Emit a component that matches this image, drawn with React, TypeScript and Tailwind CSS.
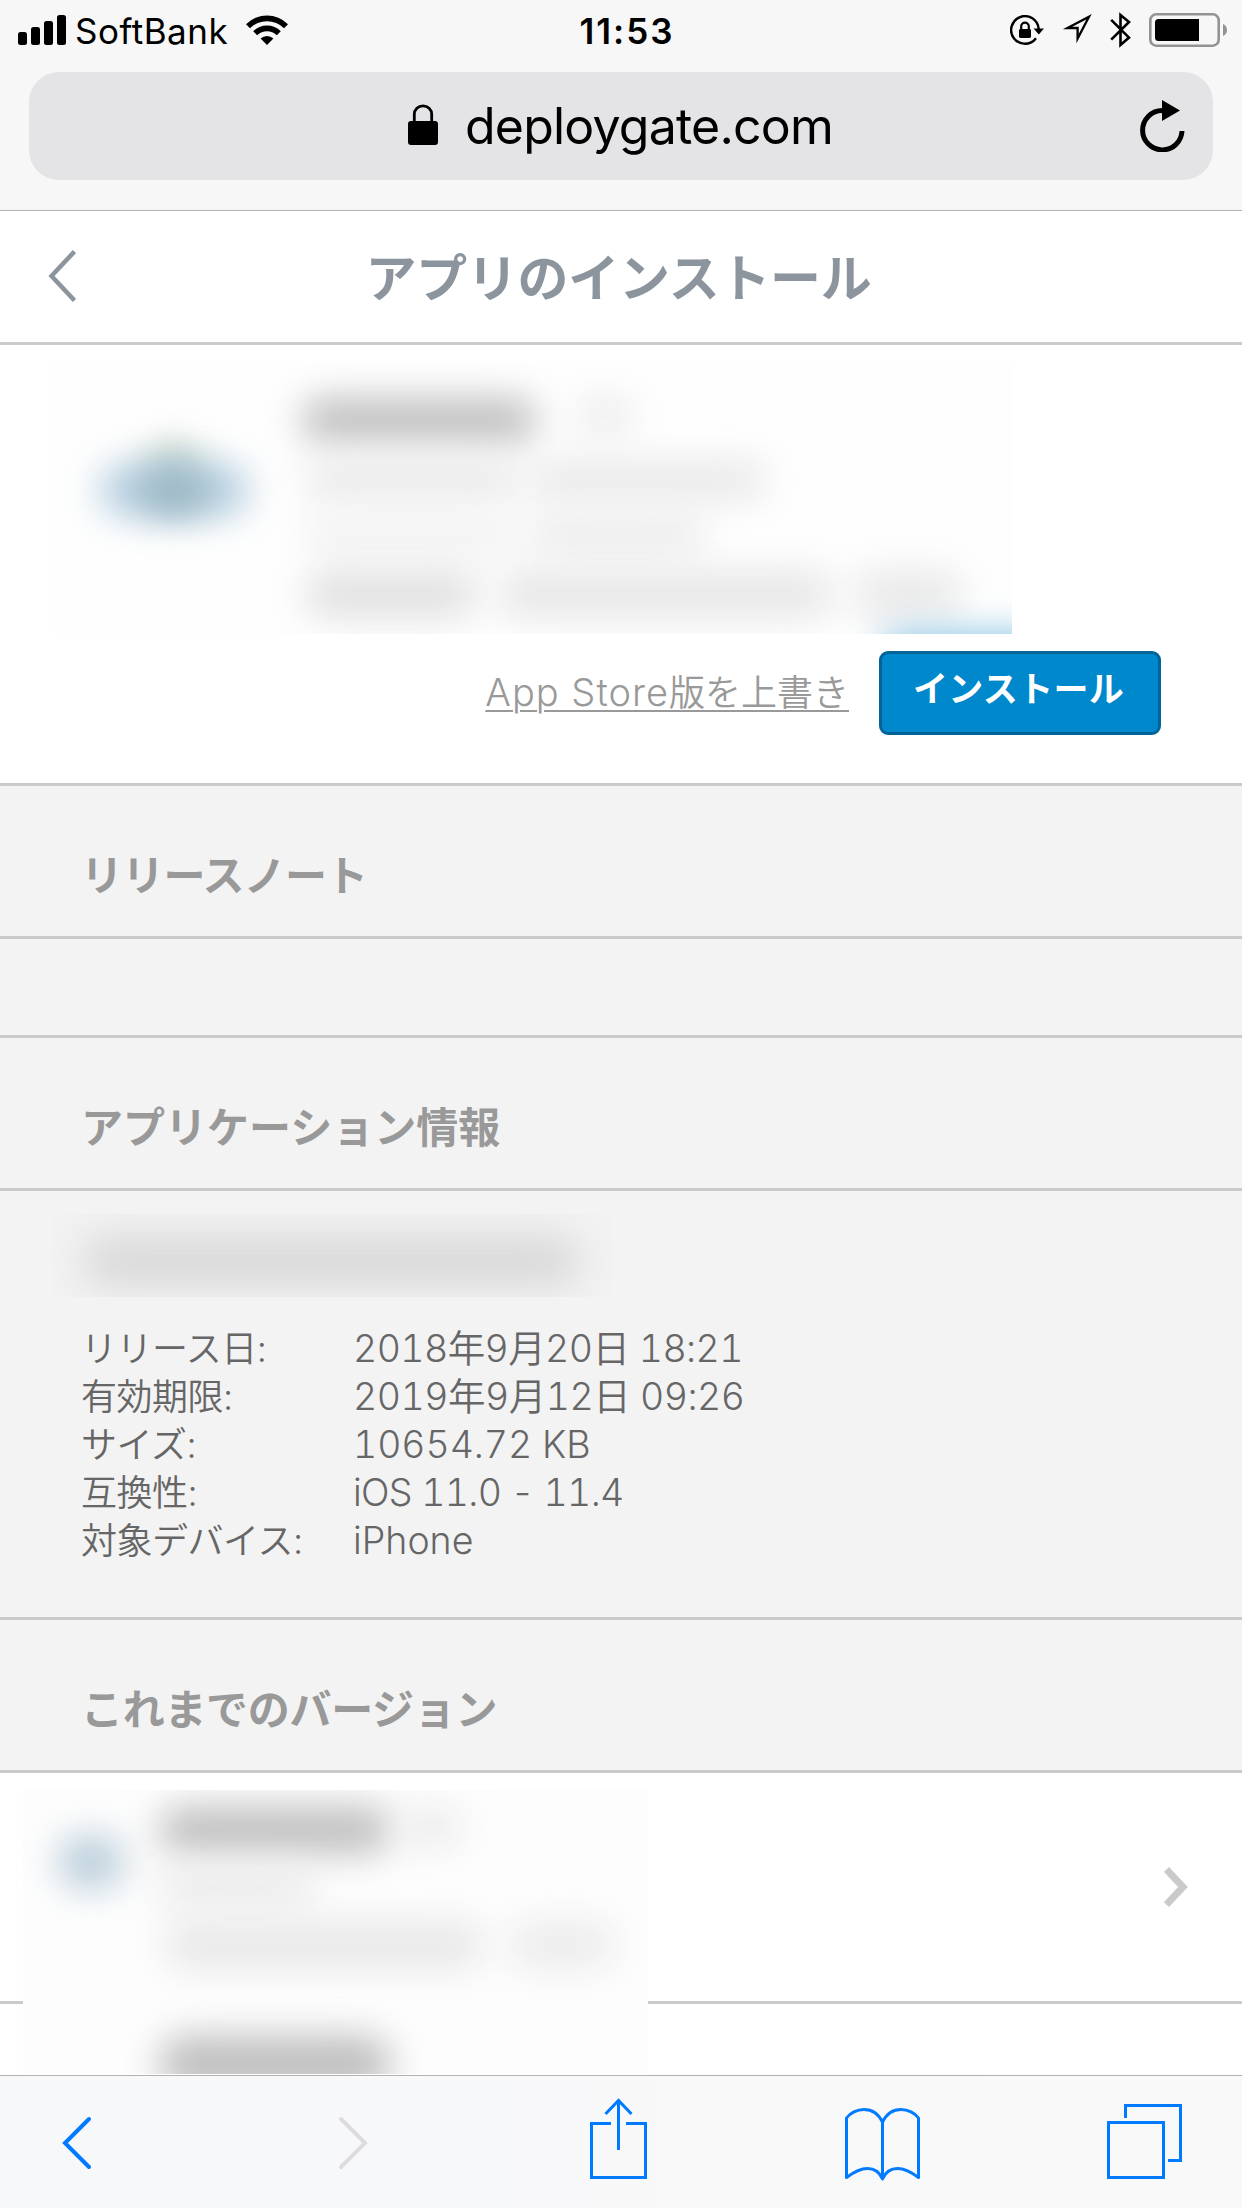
const details = [
    { label: "リリース日:", value: "2018年9月20日 18:21", tracking: "tracking-[-0.6px]" },
    { label: "有効期限:", value: "2019年9月12日 09:26", tracking: "tracking-[-0.5px]" },
    { label: "サイズ:", value: "10654.72 KB", tracking: "tracking-[-0.1px]" },
    { label: "互換性:", value: "iOS 11.0 - 11.4", tracking: "tracking-[-0.7px]" },
    { label: "対象デバイス:", value: "iPhone", tracking: "tracking-normal" },
];

function SignalIcon() {
    return (
        <svg width="48" height="30" viewBox="0 0 48 30">
            <rect x="0" y="17" width="9" height="13" rx="2.5" />
            <rect x="13" y="12" width="9" height="18" rx="2.5" />
            <rect x="26" y="6" width="9" height="24" rx="2.5" />
            <rect x="39" y="0" width="9" height="30" rx="2.5" />
        </svg>
    );
}

function WifiIcon() {
    return (
        <svg width="42" height="30" viewBox="0 0 42 30">
            <path d="M0 9.2a30 30 0 0 1 42 0L38 13.2a24.2 24.2 0 0 0-34 0z" />
            <path d="M7.2 16.3a19.6 19.6 0 0 1 27.6 0l-4 4a14 14 0 0 0-19.6 0z" />
            <path d="M14.6 23.6a9.2 9.2 0 0 1 12.8 0L21 30z" />
        </svg>
    );
}

function RotationLockIcon() {
    return (
        <svg width="34" height="30" viewBox="0 0 34 30">
            <path d="M26 23.2A13.8 13.8 0 1 1 28.7 14" fill="none" stroke="#000" strokeWidth="2.4" />
            <path d="M23.6 13.6h10.4l-5.2 6z" />
            <rect x="9" y="14" width="12" height="9" rx="1.4" />
            <path d="M11.2 15v-3.6a3.8 3.8 0 0 1 7.6 0V15" fill="none" stroke="#000" strokeWidth="2.2" />
        </svg>
    );
}

function LocationIcon() {
    return (
        <svg width="30" height="32" viewBox="0 0 30 32">
            <path d="M5.5 14 27 2.8 15.6 24.5V14z" fill="none" stroke="#000" strokeWidth="2.3" strokeMiterlimit="12" />
        </svg>
    );
}

function BluetoothIcon() {
    return (
        <svg width="22" height="38" viewBox="0 0 22 38">
            <path d="M1.2 8.8 19 26.6l-8.5 7.4V4L19 11 1.2 28.6" fill="none" stroke="#000" strokeWidth="2.6" />
        </svg>
    );
}

function BatteryIcon() {
    return (
        <svg width="78" height="34" viewBox="0 0 78 34">
            <rect x="1.3" y="1.3" width="68.4" height="31.4" rx="6" fill="none" stroke="#939393" strokeWidth="2.6" />
            <path d="M9.5 6H50v22H9.5A3.5 3.5 0 0 1 6 24.5v-15A3.5 3.5 0 0 1 9.5 6z" />
            <path d="M74 11c2.5 1 4 3.3 4 6s-1.5 5-4 6z" fill="#939393" />
        </svg>
    );
}

function LockIcon() {
    return (
        <svg width="30" height="41" viewBox="0 0 30 41">
            <rect x="0" y="17" width="30" height="24" rx="3" />
            <path d="M6.3 18v-7.5a8.7 8.7 0 0 1 17.4 0V18" fill="none" stroke="#000" strokeWidth="2.8" />
        </svg>
    );
}

function ReloadIcon() {
    return (
        <svg width="45" height="52" viewBox="0 0 45 52">
            <path d="M42 31A19.7 19.7 0 1 1 22.3 10.5" fill="none" stroke="#000" strokeWidth="5" />
            <path d="M22 0v21l18-10.5z" />
        </svg>
    );
}

/* Covers private details: a soft bar for each hidden line of text */
function Smudge({ className }: { className: string }) {
    return <div className={`shrink-0 rounded-full blur-[18px] ${className}`} />;
}

function SectionTitle({ children, tracking }: { children: React.ReactNode; tracking: string }) {
    return (
        <h2
            className={`h-[153px] shrink-0 border-b-[3px] border-[#c9cacb] bg-[#f3f3f3] pl-[81px] pt-[68px] text-[42px] font-bold leading-[44px] text-[#999] ${tracking}`}
        >
            {children}
        </h2>
    );
}

export default function App() {
    return (
        <div className="flex h-[2208px] w-[1242px] flex-col overflow-hidden bg-white font-['Inter','Noto_Sans_CJK_JP',sans-serif]">
            {/* Status bar */}
            <div className="grid h-[72px] shrink-0 grid-cols-3 bg-[#f7f7f7]">
                <div className="flex items-start pl-[18px] pt-[15px]">
                    <SignalIcon />
                    <span className="ml-[9px] w-[153px] whitespace-nowrap text-[35px] leading-[32px] tracking-[0.5px]">
                        SoftBank
                    </span>
                    <span className="ml-[18px]">
                        <WifiIcon />
                    </span>
                </div>
                <div className="pl-[12px] pt-[15px] text-center text-[35px] font-semibold leading-[32px] tracking-[2px]">
                    11:53
                </div>
                <div className="flex h-[60px] items-center justify-end pr-[15px]">
                    <RotationLockIcon />
                    <span className="ml-[18px]">
                        <LocationIcon />
                    </span>
                    <span className="ml-[18px]">
                        <BluetoothIcon />
                    </span>
                    <span className="ml-[17px]">
                        <BatteryIcon />
                    </span>
                </div>
            </div>

            {/* Address bar */}
            <div className="h-[139px] shrink-0 border-b border-[#b2b2b2] bg-[#f7f7f7] px-[29px]">
                <div className="flex h-[108px] items-center rounded-[30px] bg-[#e4e4e6] pl-[379px] pr-[28px]">
                    <span className="mt-[-3px]">
                        <LockIcon />
                    </span>
                    <span className="ml-[27px] flex-1 text-[50px] leading-[60px] tracking-[-0.8px]">deploygate.com</span>
                    <ReloadIcon />
                </div>
            </div>

            {/* Page header */}
            <header className="flex h-[134px] shrink-0 items-center border-b-[3px] border-[#ccc] pl-[48px] pr-[81px]">
                <svg className="mt-[-1px]" width="28" height="52" viewBox="0 0 28 52" fill="none" stroke="#8c959d" strokeWidth="4.5">
                    <path d="M26.5 1.5 3.5 26l23 24.5" />
                </svg>
                <h1 className="flex-1 pt-[4px] text-center text-[51px] font-bold leading-[60px] tracking-[-0.3px] text-[#8c959d]">
                    アプリのインストール
                </h1>
            </header>

            {/* Current build */}
            <section className="h-[441px] shrink-0 border-b-[3px] border-[#c9cacb] pt-[16px]">
                <div className="ml-[53px] flex h-[273px] w-[959px] overflow-hidden bg-[#fefefe]">
                    <div className="flex w-[242px] shrink-0 flex-col items-center pt-[82px]">
                        <Smudge className="h-[38px] w-[50px] bg-[#ccd8c8]" />
                        <Smudge className="mt-[-16px] h-[50px] w-[150px] bg-[#b4cee0]" />
                        <Smudge className="mt-[-50px] h-[50px] w-[68px] bg-[#9ab6c2]" />
                    </div>
                    <div className="flex shrink-0 flex-col pl-[6px] pt-[37px]">
                        <div className="flex gap-[40px]">
                            <Smudge className="h-[44px] w-[236px] bg-[#bfbfbf]" />
                            <Smudge className="h-[36px] w-[56px] bg-[#ebebeb]" />
                        </div>
                        <div className="mt-[19px] flex gap-[10px] pl-[4px]">
                            <Smudge className="h-[38px] w-[214px] bg-[#e9e9e9]" />
                            <Smudge className="h-[38px] w-[238px] bg-[#e8e8e8]" />
                        </div>
                        <div className="mt-[16px] flex gap-[10px] pl-[4px]">
                            <Smudge className="h-[38px] w-[214px] bg-[#f1f1f1]" />
                            <Smudge className="h-[38px] w-[176px] bg-[#ebebeb]" />
                        </div>
                        <div className="mt-[18px] flex gap-[20px] pl-[4px]">
                            <Smudge className="h-[46px] w-[172px] bg-[#e0e0e0]" />
                            <Smudge className="h-[46px] w-[336px] bg-[#e6e6e6]" />
                            <Smudge className="h-[46px] w-[110px] bg-[#e8e8e8]" />
                        </div>
                        <Smudge className="ml-[580px] mt-[17px] h-[40px] w-[260px] bg-[#85c1e2]" />
                    </div>
                </div>
                <div className="mt-[17px] flex justify-end pr-[81px]">
                    <a className="mr-[30px] mt-[21px] whitespace-nowrap text-[36px] font-[350] leading-[40px] text-[#999] underline decoration-2 underline-offset-[4px]">
                        <span className="text-[38px] tracking-[1px]">App Store</span>版を上書き
                    </a>
                    <button className="h-[84px] w-[282px] rounded-[9px] border-[3px] border-[#006499] bg-[#0088cc] pb-[8px] pr-[3px] text-[35px] font-bold leading-[40px] tracking-[0.3px] text-white">
                        インストール
                    </button>
                </div>
            </section>

            {/* Release notes */}
            <SectionTitle tracking="tracking-[-0.8px]">リリースノート</SectionTitle>
            <div className="h-[99px] shrink-0 border-b-[3px] border-[#c9cacb] bg-[#f3f3f3]" />

            {/* Application info */}
            <SectionTitle tracking="tracking-normal">アプリケーション情報</SectionTitle>
            <section className="h-[429px] shrink-0 border-b-[3px] border-[#c9cacb] bg-[#f3f3f3] pt-[23px]">
                <div className="ml-[53px] flex h-[83px] w-[559px] items-center overflow-hidden bg-[#f2f2f2] pl-[30px] pt-[10px]">
                    <Smudge className="h-[50px] w-[496px] bg-[#d9d9d9]" />
                </div>
                <dl className="mt-[28px] grid grid-cols-[272px_1fr] pl-[81px] text-[36px] font-[350] leading-[48px] text-[#666]">
                    {details.map(({ label, value, tracking }) => (
                        <div key={label} className="contents">
                            <dt className="tracking-[-0.5px]">{label}</dt>
                            <dd className={`text-[37.5px] leading-[48px] tabular-nums ${tracking}`}>{value}</dd>
                        </div>
                    ))}
                </dl>
            </section>

            {/* Previous versions */}
            <SectionTitle tracking="tracking-[-0.3px]">これまでのバージョン</SectionTitle>
            <section className="relative flex-1">
                <div className="flex h-[231px] items-center justify-end border-b-[3px] border-[#c9cacb] pr-[54px]">
                    <svg width="24" height="40" viewBox="0 0 24 40" fill="none" stroke="#c8cacc" strokeWidth="7">
                        <path d="M2.5 2.5 19 20 2.5 37.5" />
                    </svg>
                </div>
                <div className="absolute left-[23px] top-[17px] flex h-[284px] w-[625px] overflow-hidden bg-[#fdfdfd]">
                    <div className="flex w-[136px] shrink-0 justify-center pt-[46px]">
                        <Smudge className="h-[52px] w-[66px] bg-[#b8ccd9]" />
                    </div>
                    <div className="flex flex-col pt-[17px]">
                        <div className="flex gap-[10px]">
                            <Smudge className="h-[46px] w-[232px] bg-[#bebebe]" />
                            <Smudge className="h-[40px] w-[60px] bg-[#ebebeb]" />
                        </div>
                        <Smudge className="mt-[14px] h-[40px] w-[156px] bg-[#ebebeb]" />
                        <div className="mt-[15px] flex gap-[26px] pl-[6px]">
                            <Smudge className="h-[46px] w-[318px] bg-[#e7e7e7]" />
                            <Smudge className="h-[46px] w-[106px] bg-[#ebebeb]" />
                        </div>
                        <Smudge className="mt-[68px] h-[56px] w-[232px] bg-[#bebebe]" />
                    </div>
                </div>
            </section>

            {/* Toolbar */}
            <nav className="flex h-[133px] shrink-0 items-start border-t border-[#b2b2b2] bg-gradient-to-r from-[#f7f8fa] to-[#f9f9f9] pl-[62px] text-[#007aff]">
                <svg className="mt-[40px]" width="30" height="54" viewBox="0 0 30 54" fill="none" stroke="currentColor" strokeWidth="4" strokeLinecap="round">
                    <path d="M27 3 3 27l24 24" />
                </svg>
                <svg className="ml-[246px] mt-[40px]" width="30" height="54" viewBox="0 0 30 54" fill="none" stroke="#dcdcdd" strokeWidth="4" strokeLinecap="round">
                    <path d="M3 3 27 27 3 51" />
                </svg>
                <svg className="ml-[222px] mt-[22px]" width="57" height="82" viewBox="0 0 57 82" fill="none" stroke="currentColor" strokeWidth="3">
                    <path d="M21 25.5H1.5v54h54v-54H36M28.5 3v49M15.5 16 28.5 2.5 41.5 16" />
                </svg>
                <svg className="ml-[198px] mt-[32px]" width="75" height="74" viewBox="0 0 75 74" fill="none" stroke="currentColor" strokeWidth="3" strokeLinejoin="round">
                    <path d="M37.5 71V14C33 5 26 1.5 19 1.5S5 5 1.5 10v59.5c8-6 14.5-9 21-9 7 0 12 3.5 15 10.5 3-7 8-10.5 15-10.5 6.5 0 13 3 21 9V10C70 5 63 1.5 56 1.5S42 5 37.5 14" />
                </svg>
                <svg className="ml-[187px] mt-[28px]" width="75" height="76" viewBox="0 0 75 76" fill="none" stroke="currentColor" strokeWidth="3">
                    <path d="M1.5 18.5h55v55h-55zM18.5 14V1.5h55v55H61" />
                </svg>
            </nav>
        </div>
    );
}
